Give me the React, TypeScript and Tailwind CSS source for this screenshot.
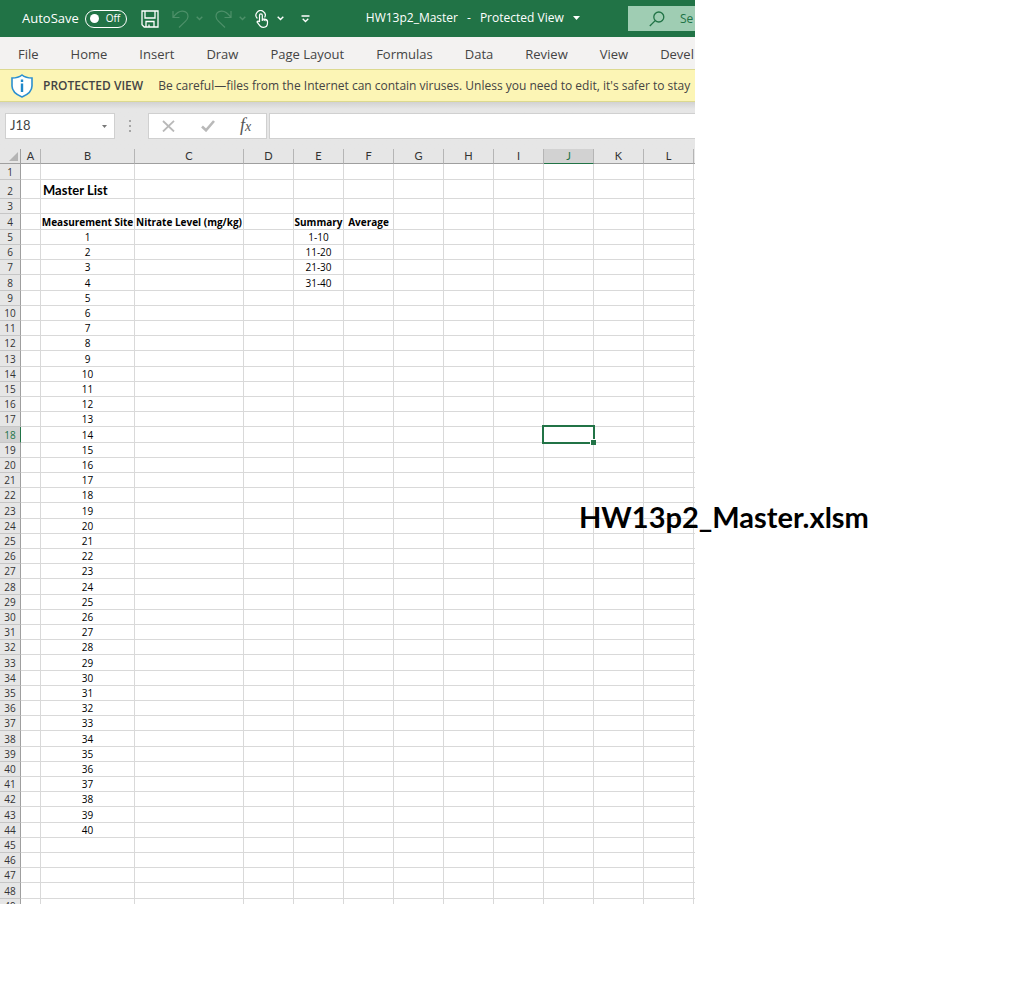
// ============================================================================
// Spreadsheet window: title bar, ribbon tabs, protected view bar, grid
// ============================================================================

import clsx from 'clsx';

const TABS = ['File', 'Home', 'Insert', 'Draw', 'Page Layout', 'Formulas', 'Data', 'Review', 'View', 'Devel'];

const COLUMNS = ['A', 'B', 'C', 'D', 'E', 'F', 'G', 'H', 'I', 'J', 'K', 'L', ''];
const ROW_COUNT = 49;
const ACTIVE = { column: 'J', row: 18 };

const SUMMARY = ['1-10', '11-20', '21-30', '31-40'];

function cellText(column: string, row: number): string {
  if (column === 'B' && row === 2) return 'Master List';
  if (row === 4) {
    if (column === 'B') return 'Measurement Site';
    if (column === 'C') return 'Nitrate Level (mg/kg)';
    if (column === 'E') return 'Summary';
    if (column === 'F') return 'Average';
  }
  if (column === 'B' && row >= 5 && row <= 44) return String(row - 4);
  if (column === 'E' && row >= 5) return SUMMARY[row - 5] ?? '';
  return '';
}

function rowHeight(row: number): string {
  if (row === 2) return 'h-[19px]';
  if (row === 1 || row === 4 || (row > 4 && row % 5 === 3)) return 'h-[16px]';
  return 'h-[15px]';
}

function Chevron({ className }: { className?: string }) {
  return (
    <svg width="7" height="5" viewBox="0 0 7 5" fill="none" stroke="currentColor" strokeWidth="1.4" className={className}>
      <path d="M0.7 0.8 3.5 3.6 6.3 0.8" />
    </svg>
  );
}

function TitleBar() {
  return (
    <header className="flex h-[37px] items-center overflow-hidden bg-[#217346] pl-[22px] text-[12px] text-white">
      <label className="flex shrink-0 items-center gap-[6px] text-[13px]">
        AutoSave
        <input type="checkbox" className="peer sr-only" />
        <span className="flex h-[18px] w-[42px] items-center gap-[7px] rounded-full border border-white pl-1 text-[10px]">
          <span className="h-[9px] w-[9px] rounded-full bg-white" />
          Off
        </span>
      </label>
      <button aria-label="Save" className="ml-[14px] shrink-0">
        <svg width="18" height="18" viewBox="0 0 18 18" fill="none" stroke="currentColor" strokeWidth="1.3">
          <path d="M1 1h16v16H3.2L1 14.8z" />
          <path d="M4 1v7h10V1M5 17v-5.5h8V17M8 14.5V17" />
        </svg>
      </button>
      <button aria-label="Undo" className="ml-[13px] flex shrink-0 items-center gap-[7px] text-[#4d9069]">
        <svg width="17" height="18" viewBox="0 0 17 18" fill="none" stroke="currentColor" strokeWidth="1.2">
          <path d="M1 1v6.5h6.5M1.3 7.2C4 3.5 7 1 10.5 1.2c3.5.2 5.5 2.6 5.5 5.3 0 2-1 3.2-2.4 4.600L7 17.5" />
        </svg>
        <Chevron />
      </button>
      <button aria-label="Redo" className="ml-[12px] flex shrink-0 items-center gap-[7px] text-[#4d9069]">
        <svg width="17" height="18" viewBox="0 0 17 18" fill="none" stroke="currentColor" strokeWidth="1.2">
          <path d="M16 1v6.5H9.5M15.7 7.2C13 3.5 10 1 6.5 1.2 3 1.4 1 3.8 1 6.5c0 2 1 3.2 2.4 4.6L10 17.5" />
        </svg>
        <Chevron />
      </button>
      <button aria-label="Touch mode" className="ml-[9px] flex shrink-0 items-center gap-[8px]">
        <svg width="14" height="18" viewBox="0 0 14 18" fill="none" stroke="currentColor" strokeWidth="1.2">
          <path d="M2.4 8.5A4.6 4.6 0 1 1 9.6 7.5" />
          <path d="M4.5 12V5.2a1.4 1.4 0 0 1 2.8 0v3.6c2.3 0 5.2.5 5.2 2.4V13c0 2.5-1.6 4.3-4 4.3-2.7 0-3.6-1.3-6.5-5.3.6-1.4 1.7-.9 2.5 0M7.3 8.8V11M9.2 9v2M11 9.4v1.8" />
        </svg>
        <Chevron />
      </button>
      <button aria-label="Customize toolbar" className="ml-[17px] shrink-0">
        <svg width="9" height="8" viewBox="0 0 9 8" fill="none" stroke="currentColor" strokeWidth="1.3">
          <path d="M0.5 1h8M1.7 3.7 4.5 6.5 7.3 3.700" />
        </svg>
      </button>
      <button className="ml-[56px] flex shrink-0 items-center gap-[9px] pb-[2px]">
        <span>HW13p2_Master</span>
        <span>-</span>
        <span>Protected View</span>
        <svg width="7" height="4" viewBox="0 0 7 4" fill="currentColor">
          <path d="M0 0h7L3.5 4z" />
        </svg>
      </button>
      <label className="ml-auto flex h-[25px] w-[67px] shrink-0 items-center gap-[15px] bg-[#9fcdb3] pl-[21px] text-[#217346]">
        <svg width="16" height="16" viewBox="0 0 16 16" fill="none" stroke="currentColor" strokeWidth="1.3" className="shrink-0">
          <circle cx="9.8" cy="6" r="5" />
          <path d="M6.2 9.6 0.8 15" />
        </svg>
        <input
          aria-label="Search"
          placeholder="Se"
          className="w-full min-w-0 bg-transparent outline-none placeholder:text-[#217346] placeholder:opacity-100"
        />
      </label>
    </header>
  );
}

function ProtectedViewBar() {
  return (
    <div className="flex h-[33px] items-center overflow-hidden border-y border-y-[#dcd98f] bg-[#fcf5b5] pt-px pl-[11px] text-[12px] whitespace-nowrap text-[#444444]">
      <svg width="22" height="24" viewBox="0 0 22 24" className="shrink-0">
        <path d="M11 1C8.5 3 5 4 1 4v8c0 5 4 8.5 10 11 6-2.5 10-6 10-11V4c-4 0-7.5-1-10-3z" fill="#fff" stroke="#2b8fcf" strokeWidth="1.6" />
        <path d="M11 9.5V18M11 5.5V8" stroke="#1e88c9" strokeWidth="2.4" />
      </svg>
      <strong className="ml-[10px] font-semibold">PROTECTED VIEW</strong>
      <span className="ml-[15px]">
        Be careful—files from the Internet can contain viruses. Unless you need to edit, it's safer to stay
      </span>
    </div>
  );
}

function FormulaBar() {
  return (
    <div className="flex h-[47px] items-start bg-[#e6e6e6] bg-linear-to-b from-[#d2d2d2] from-0% to-[#e6e6e6] to-15% pt-[11px] pl-[5px]">
      <div className="flex h-[26px] w-[110px] shrink-0 items-center justify-between border border-[#d0d0d0] bg-white px-1 text-[#444444]">
        <input
          aria-label="Name box"
          defaultValue="J18"
          className="w-[60px] font-['Lato',sans-serif] text-[13px] outline-none"
        />
        <button aria-label="Open name list" className="pr-[3px]">
          <svg width="5" height="3" viewBox="0 0 5 3" fill="#777777">
            <path d="M0 0h5L2.5 3z" />
          </svg>
        </button>
      </div>
      <svg width="3" height="26" viewBox="0 0 3 26" fill="#a6a6a6" className="ml-[14px] shrink-0">
        <path d="M0 7h2v2H0zM0 12h2v2H0zM0 17h2v2H0z" />
      </svg>
      <div className="ml-[16px] flex h-[26px] w-[119px] shrink-0 items-center border border-[#d0d0d0] bg-white pl-[13px]">
        <button aria-label="Cancel">
          <svg width="13" height="12" viewBox="0 0 13 12" fill="none" stroke="#b9b9b9" strokeWidth="1.8">
            <path d="M1 1l11 10.5M12 0.8 1 11.5" />
          </svg>
        </button>
        <button aria-label="Enter" className="ml-[26px]">
          <svg width="14" height="12" viewBox="0 0 14 12" fill="none" stroke="#b9b9b9" strokeWidth="2.6">
            <path d="M1 6.5l4 3.8L13 1" />
          </svg>
        </button>
        <button
          aria-label="Insert function"
          className="ml-[25px] font-['Liberation_Serif',serif] text-[18px] leading-[20px] text-[#555555] italic"
        >
          f<span className="text-[14px]">x</span>
        </button>
      </div>
      <input
        aria-label="Formula"
        className="ml-[2px] h-[26px] min-w-0 flex-1 border border-r-0 border-[#d0d0d0] bg-white px-1 text-[12px] outline-none"
      />
    </div>
  );
}

function GridRow({ row }: { row: number }) {
  const activeRow = row === ACTIVE.row;
  return (
    <tr className={rowHeight(row)}>
      <th
        scope="row"
        className={clsx(
          'border-r border-b border-b-[#c6c6c6] font-normal',
          activeRow ? 'border-r-[#217346] bg-[#d2d2d2] text-[#217346]' : 'border-r-[#9f9f9f] bg-[#e6e6e6] text-[#333333]',
          row === 2 && 'align-bottom',
        )}
      >
        {row}
      </th>
      {COLUMNS.map((column) => (
        <td
          key={column}
          className={clsx(
            'border-b border-[#d9d9d9] whitespace-nowrap',
            column !== '' && 'border-r',
            row === 2 ? "pt-[2px] pl-[2px] text-left font-['Lato',sans-serif] text-[13px] font-bold" : 'text-center',
            row === 4 && 'font-bold',
            activeRow && column === ACTIVE.column && 'relative z-10',
          )}
        >
          {cellText(column, row)}
          {activeRow && column === ACTIVE.column && (
            <div className="absolute -inset-[2px] border-2 border-[#217346]">
              <div className="absolute -right-[3px] -bottom-[3px] h-[6px] w-[6px] border-t border-l border-white bg-[#217346]" />
            </div>
          )}
        </td>
      ))}
    </tr>
  );
}

function Grid() {
  return (
    <div className="max-h-[755px] overflow-hidden">
      <table className="w-full table-fixed border-separate border-spacing-0 text-[10px] leading-[14px] text-black">
        <colgroup>
          <col className="w-[21px]" />
          <col className="w-[20px]" />
          <col className="w-[94px]" />
          <col className="w-[109px]" />
          {COLUMNS.slice(3, 12).map((column) => (
            <col key={column} className="w-[50px]" />
          ))}
          <col />
        </colgroup>
        <thead>
          <tr className="h-[15px] bg-[#e6e6e6]">
            <td className="border-r border-b border-[#9f9f9f]">
              <svg width="9" height="9" viewBox="0 0 9 9" fill="#b4b4b4" className="mr-[2px] ml-auto">
                <path d="M9 0v9H0z" />
              </svg>
            </td>
            {COLUMNS.map((column) => (
              <th
                key={column}
                scope="col"
                className={clsx(
                  "border-b font-['Lato',sans-serif] text-[11px] leading-[14px] font-normal",
                  column !== '' && 'border-r border-r-[#b5b5b5]',
                  column === ACTIVE.column
                    ? 'border-b-[#217346] bg-[#d2d2d2] text-[#217346]'
                    : 'border-b-[#9f9f9f] text-[#333333]',
                )}
              >
                {column}
              </th>
            ))}
          </tr>
        </thead>
        <tbody>
          {Array.from({ length: ROW_COUNT }, (_, i) => (
            <GridRow key={i} row={i + 1} />
          ))}
        </tbody>
      </table>
    </div>
  );
}

export default function App() {
  return (
    <main className="relative min-h-screen bg-white pr-[329px] font-['Open_Sans','Noto_Sans',sans-serif]">
      <TitleBar />
      <nav className="flex h-[32px] items-center gap-[32px] overflow-hidden bg-[#f3f2f1] pt-[3px] pl-[18px] text-[13px] text-[#444444]">
        {TABS.map((tab) => (
          <button key={tab} className="shrink-0 whitespace-nowrap">
            {tab}
          </button>
        ))}
      </nav>
      <ProtectedViewBar />
      <FormulaBar />
      <Grid />

      {/* File name caption, laid over the grid edge */}
      <p className="absolute top-[499px] left-[579px] font-['Lato',sans-serif] text-[29px] leading-[36px] font-bold text-black">
        HW13p2_Master.xlsm
      </p>
    </main>
  );
}
